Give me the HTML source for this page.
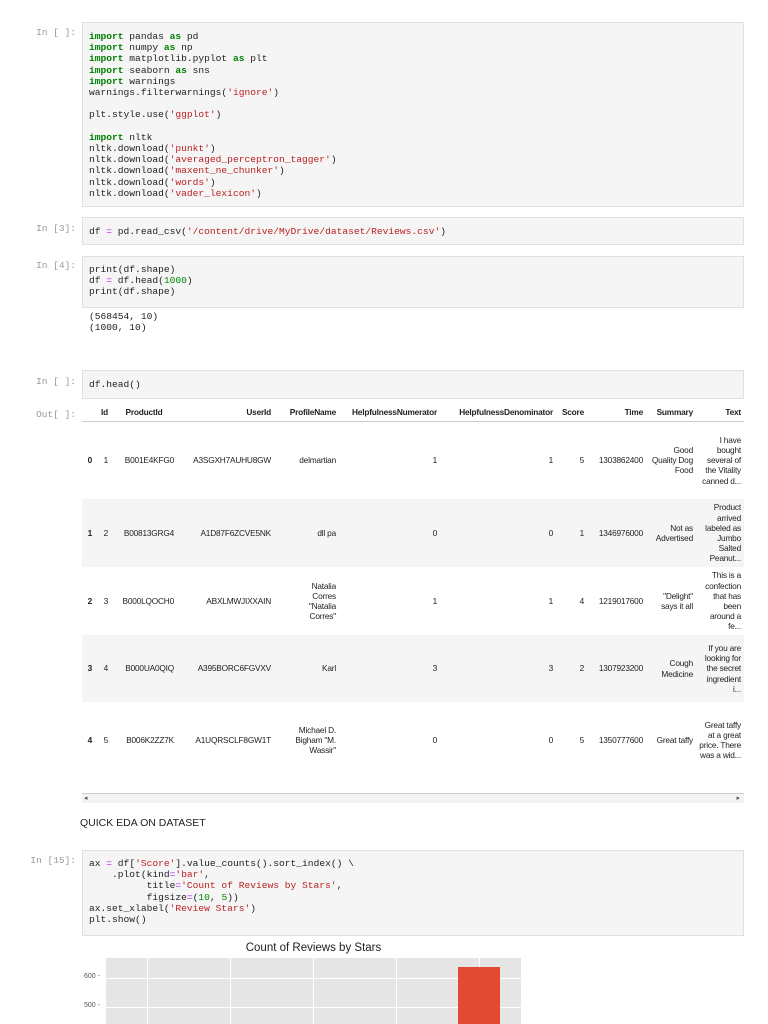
<!DOCTYPE html>
<html><head><meta charset="utf-8"><style>
*{margin:0;padding:0;box-sizing:border-box}
body{width:768px;height:1024px;background:#fff;position:relative;overflow:hidden;font-family:"Liberation Sans",sans-serif;color:#000}
.p{position:absolute;font-family:"Liberation Mono",monospace;font-size:9.5px;color:#999;text-align:right;width:76px;left:0}
.c{position:absolute;left:82px;width:662px;background:#f5f5f5;border:1px solid #e0e0e0}
pre{position:absolute;left:89px;font-family:"Liberation Mono",monospace;font-size:9.6px;line-height:11.2px;color:#222;white-space:pre}
.k{color:#008000;font-weight:bold}.s{color:#ba2121}.o{color:#aa22ff}.n{color:#080}.b{color:#3b72b0}
table{position:absolute;left:82px;top:404px;border-collapse:collapse;table-layout:fixed;font-size:8.3px;line-height:10.2px;color:#222;letter-spacing:-0.2px}
td,th{text-align:right;padding:0 3px;vertical-align:middle;overflow:hidden}
th{height:17px;border-bottom:1.5px solid #ccc;font-weight:bold}
tr.a td{background:#f5f5f5}
td.i{font-weight:bold}
</style></head><body>
<div class="p" style="top:27px">In [ ]:</div>
<div class="c" style="top:22px;height:185px"></div>
<pre style="top:31px"><span class="k">import</span> pandas <span class="k">as</span> pd
<span class="k">import</span> numpy <span class="k">as</span> np
<span class="k">import</span> matplotlib.pyplot <span class="k">as</span> plt
<span class="k">import</span> seaborn <span class="k">as</span> sns
<span class="k">import</span> warnings
warnings.filterwarnings(<span class="s">'ignore'</span>)

plt.style.use(<span class="s">'ggplot'</span>)

<span class="k">import</span> nltk
nltk.download(<span class="s">'punkt'</span>)
nltk.download(<span class="s">'averaged_perceptron_tagger'</span>)
nltk.download(<span class="s">'maxent_ne_chunker'</span>)
nltk.download(<span class="s">'words'</span>)
nltk.download(<span class="s">'vader_lexicon'</span>)</pre>

<div class="p" style="top:223px">In [3]:</div>
<div class="c" style="top:217px;height:28px"></div>
<pre style="top:226px">df <span class="o">=</span> pd.read_csv(<span class="s">'/content/drive/MyDrive/dataset/Reviews.csv'</span>)</pre>

<div class="p" style="top:260px">In [4]:</div>
<div class="c" style="top:256px;height:52px"></div>
<pre style="top:264px">print(df.shape)
df <span class="o">=</span> df.head(<span class="n">1000</span>)
print(df.shape)</pre>
<pre style="top:311px">(568454, 10)
(1000, 10)</pre>

<div class="p" style="top:376px">In [ ]:</div>
<div class="c" style="top:370px;height:29px"></div>
<pre style="top:379px">df.head()</pre>
<div class="p" style="top:409px">Out[ ]:</div>

<table>
<colgroup><col style="width:13px"><col style="width:16px"><col style="width:66px"><col style="width:97px"><col style="width:65px"><col style="width:101px"><col style="width:116px"><col style="width:31px"><col style="width:59px"><col style="width:50px"><col style="width:48px"></colgroup>
<tr><th></th><th>Id</th><th style="text-align:center">ProductId</th><th>UserId</th><th>ProfileName</th><th>HelpfulnessNumerator</th><th>HelpfulnessDenominator</th><th>Score</th><th>Time</th><th>Summary</th><th>Text</th></tr>
<tr style="height:78px"><td class="i">0</td><td>1</td><td>B001E4KFG0</td><td>A3SGXH7AUHU8GW</td><td>delmartian</td><td>1</td><td>1</td><td>5</td><td>1303862400</td><td>Good Quality Dog Food</td><td>I have bought several of the Vitality canned d...</td></tr>
<tr class="a" style="height:68px"><td class="i">1</td><td>2</td><td>B00813GRG4</td><td>A1D87F6ZCVE5NK</td><td>dll pa</td><td>0</td><td>0</td><td>1</td><td>1346976000</td><td>Not as Advertised</td><td>Product arrived labeled as Jumbo Salted Peanut...</td></tr>
<tr style="height:68px"><td class="i">2</td><td>3</td><td>B000LQOCH0</td><td>ABXLMWJIXXAIN</td><td style="padding-left:12px">Natalia Corres "Natalia Corres"</td><td>1</td><td>1</td><td>4</td><td>1219017600</td><td>"Delight" says it all</td><td>This is a confection that has been around a fe...</td></tr>
<tr class="a" style="height:67px"><td class="i">3</td><td>4</td><td>B000UA0QIQ</td><td>A395BORC6FGVXV</td><td>Karl</td><td>3</td><td>3</td><td>2</td><td>1307923200</td><td>Cough Medicine</td><td>If you are looking for the secret ingredient i...</td></tr>
<tr style="height:76px"><td class="i">4</td><td>5</td><td>B006K2ZZ7K</td><td>A1UQRSCLF8GW1T</td><td style="padding-left:12px">Michael D. Bigham "M. Wassir"</td><td>0</td><td>0</td><td>5</td><td>1350777600</td><td>Great taffy</td><td>Great taffy at a great price. There was a wid...</td></tr>
</table>

<div style="position:absolute;left:82px;top:793px;width:662px;height:10px;background:#f3f3f3;border-top:1px solid #ccc;font-size:7px;color:#555;line-height:10px">&nbsp;◂<span style="position:absolute;right:4px">▸</span></div>
<div style="position:absolute;left:80px;top:817px;font-size:10.5px;color:#222">QUICK EDA ON DATASET</div>

<div class="p" style="top:855px">In [15]:</div>
<div class="c" style="top:850px;height:86px"></div>
<pre style="top:858px">ax <span class="o">=</span> df[<span class="s">'Score'</span>].value_counts().sort_index() \
    .plot(kind<span class="o">=</span><span class="s">'bar'</span>,
          title<span class="o">=</span><span class="s">'Count of Reviews by Stars'</span>,
          figsize<span class="o">=</span>(<span class="n">10</span>, <span class="n">5</span>))
ax.set_xlabel(<span class="s">'Review Stars'</span>)
plt.show()</pre>

<div style="position:absolute;left:106px;top:942px;width:415px;text-align:center;font-size:11.5px;color:#222">Count of Reviews by Stars</div>
<div style="position:absolute;left:106px;top:958px;width:415px;height:66px;background:#e5e5e5">
<div style="position:absolute;left:41px;top:0;width:1px;height:66px;background:#fff"></div>
<div style="position:absolute;left:124px;top:0;width:1px;height:66px;background:#fff"></div>
<div style="position:absolute;left:207px;top:0;width:1px;height:66px;background:#fff"></div>
<div style="position:absolute;left:290px;top:0;width:1px;height:66px;background:#fff"></div>
<div style="position:absolute;left:373px;top:0;width:1px;height:66px;background:#fff"></div>
<div style="position:absolute;left:0;top:20px;width:415px;height:1px;background:#fff"></div>
<div style="position:absolute;left:0;top:49px;width:415px;height:1px;background:#fff"></div>
<div style="position:absolute;left:352px;top:9px;width:42px;height:57px;background:#e24a33"></div>
</div>
<div style="position:absolute;left:84px;top:973px;font-size:7px;color:#555">600 -</div>
<div style="position:absolute;left:84px;top:1002px;font-size:7px;color:#555">500 -</div>
</body></html>
